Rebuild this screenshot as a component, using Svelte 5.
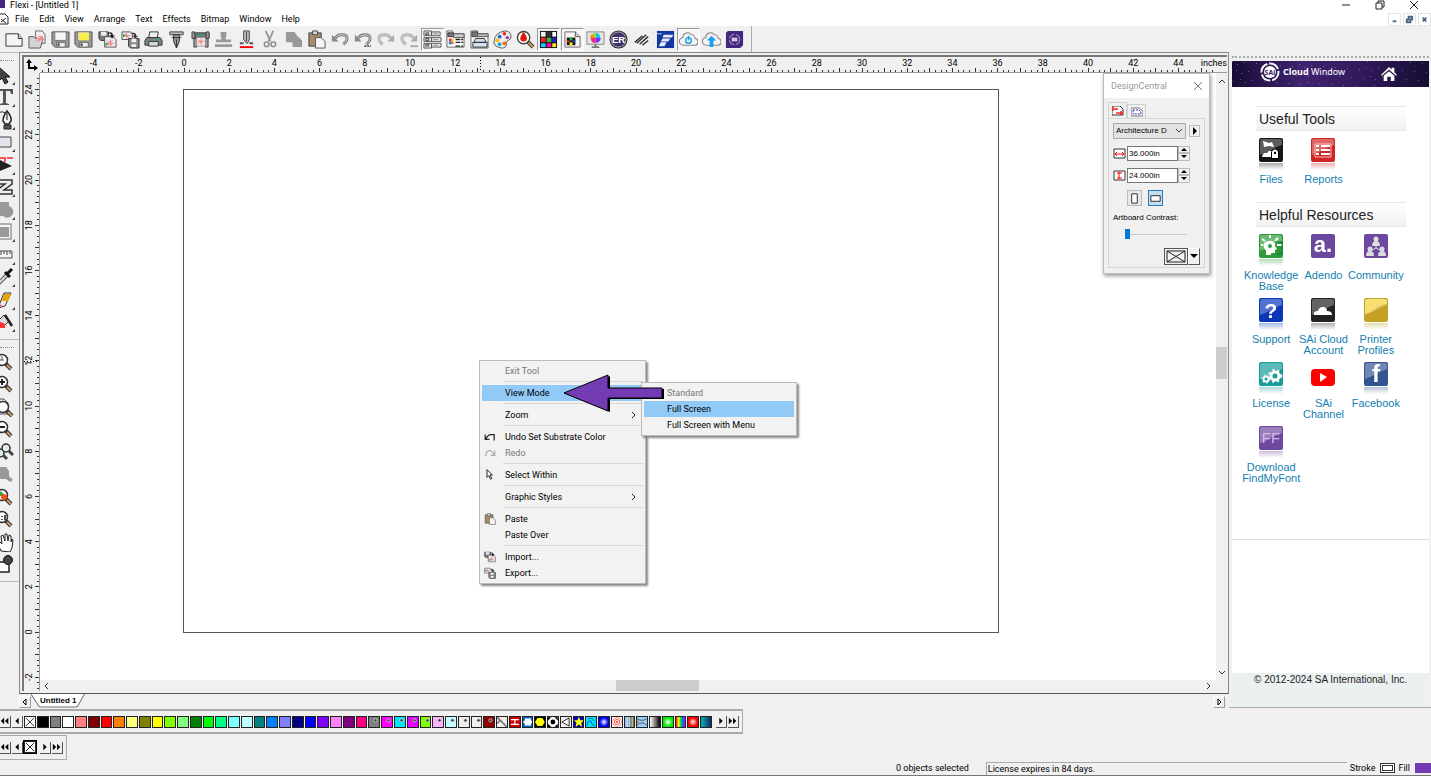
<script>
    const menus = ['File', 'Edit', 'View', 'Arrange', 'Text', 'Effects', 'Bitmap', 'Window', 'Help'];

    const toolGroups = [
        ['new', 'open', 'save', 'saveAll'],
        ['import', 'export', 'print', 'plot'],
        ['rip', 'stamp', 'engrave', 'cut'],
        ['copy', 'paste', 'undo', 'undoTo'],
        ['redo', 'redoTo', 'layers', 'colorList'],
        ['plotList', 'palette', 'inspect', 'swatches'],
        ['page', 'monitor', 'er', 'hatch'],
        ['rocket', 'cloudInfo', 'cloudUp', 'saHub']
    ];
    const pressed = ['layers', 'swatches', 'page', 'cloudInfo'];

    const sideTools = [
        ['select', 'text'], ['pen', 'rect'], ['effect', 'outline'],
        ['weld', 'frame'], ['measure', 'dropper'], ['pencil', 'fill']
    ];
    const zoomTools = [
        ['zoomPrev', 'zoomIn'], ['zoomPage', 'zoomOut'], ['zoomPair', 'zoomOff'],
        ['zoomShape', 'zoomOne'], ['hand', 'pin']
    ];

    const lens = '<path d="M12 12l5 5" stroke="#333" stroke-width="4"/><path d="M13 13l4 4" stroke="#c9a06a" stroke-width="2"/><circle cx="8" cy="8" r="5.5" fill="#fff" stroke="#333" stroke-width="1.5"/>';
    const disk = '<path d="M1 2h18v16H4l-3-3z" fill="#999" stroke="#555"/><path d="M4 2h12v9H4z" fill="#f6f6f6" stroke="#777"/><path d="M6 13h9v5H6z" fill="#eee" stroke="#666"/><path d="M7 14h2v3H7z" fill="#444"/>';
    const cloud = '<path d="M5 16a4 4 0 0 1-1-8 5 5 0 0 1 9-3 4 4 0 0 1 4 4 3.5 3.5 0 0 1-1 7z" fill="#f5f5f5" stroke="#888" stroke-width="1.2"/>';
    const backArrow = '<path d="M2 5v7h7z" fill="#888"/><path d="M5 9q3-4 7-4 6 0 6 4 0 3-4 6" stroke="#777" stroke-width="3"/><path d="M5 9q3-4 7-4 6 0 6 4 0 3-4 6" stroke="#ddd"/>';
    const nextArrow = '<path d="M18 5v7h-7z" fill="#aaa"/><path d="M15 9q-3-4-7-4-6 0-6 4 0 3 4 6" stroke="#aaa" stroke-width="3"/><path d="M15 9q-3-4-7-4-6 0-6 4 0 3 4 6" stroke="#ddd"/>';

    const icons = {
        new: '<path d="M1 4h13l4 5v8H1z" fill="#f4f4f6" stroke="#333"/><path d="M14 4v5h4" fill="#ccc" stroke="#333"/>',
        open: '<path d="M8 1h7l3 4v9H8z" fill="#eee" stroke="#666"/><path d="M1 7h5l2 2h8l-3 10H1z" fill="#d4d4d4" stroke="#555"/><path d="M10 12l5-5m-4 0h4v4M8 8l8 3" stroke="#f58a8a" stroke-width="1.5"/>',
        save: disk,
        saveAll: disk + '<path d="M5 3h11v8H5z" fill="#f6ee4c"/>',
        import: '<path d="M1 2h10v9H3L1 9z" fill="#777" stroke="#333"/><path d="M3 2h6v4H3z" fill="#eee"/><path d="M7 7h9l3 3v8H7z" fill="#eee" stroke="#555"/><path d="M11 3q4-2 5 3l2-1-3 4-3-3 2-1q-1-2-3-1z" fill="#222"/><path d="M9 14h8m-4-4v7m-3-6 5 5m0-5-5 5" stroke="#f07b7b"/><path d="M8 13l3 2-3 2z" fill="#2a5"/>',
        export: '<path d="M1 2h9l2 2v6H1z" fill="#eee" stroke="#555"/><path d="M3 6h7M6 3v6M4 4l4 4" stroke="#f07b7b"/><path d="M2 4l3 2-3 2z" fill="#2a5"/><path d="M8 9h11v10H10l-2-2z" fill="#888" stroke="#333"/><path d="M11 9h5v4h-5zM11 15h5v3h-5z" fill="#eee"/><path d="M11 3q5-1 5 3h2l-3 3-3-3h2q0-2-3-2z" fill="#333"/>',
        print: '<path d="M6 2h9l-1 6H5z" fill="#eee" stroke="#333"/><path d="M3 8h14l2 3v5H1v-5z" fill="#7c8480" stroke="#333"/><path d="M5 12h10v5H5z" fill="#d8d8d8" stroke="#333"/><path d="M15 10h2" stroke="#2b4" stroke-width="2"/>',
        plot: '<path d="M3 2h14v3H3z" fill="#bbb" stroke="#444"/><path d="M7 5h6v7l-3 7-3-7z" fill="#999" stroke="#333"/><path d="M5 8h10M10 10v8" stroke="#333"/>',
        rip: '<path d="M2 3h17v5H2z" fill="#777" stroke="#333"/><path d="M1 2h3v7H1zM16 2h3v7h-3zM3 9h3v9H3zM15 9h3v9h-3z" fill="#999" stroke="#444"/><path d="M6 8h9v9H6z" fill="#f8f4f4" stroke="#999"/><path d="M7 12h7m-3.500-4v8m-3-6 5 5m0-5-5 5" stroke="#ee8484"/><path d="M5 5h9" stroke="#1a8"/>',
        stamp: '<path d="M7 2h6v4l-1 4h6v3H2v-3h6L7 6zM1 15h18v3H1z" fill="#999"/>',
        engrave: '<path d="M7 1h6v9l-2 4-1 0-3-4zM10 2v10" fill="#bbb" stroke="#444"/><path d="M3 14h4m6 0h4" stroke="#555" stroke-width="2"/><path d="M3 18h14" stroke="#f00" stroke-width="2"/>',
        cut: '<path d="M6 1l5 11M14 1L9 12" stroke="#999" stroke-width="2"/><circle cx="7" cy="15" r="2.5" stroke="#888" stroke-width="1.5"/><circle cx="14" cy="15" r="2.5" stroke="#888" stroke-width="1.5"/>',
        copy: '<path d="M2 2h9l3 4v7H2zM9 7h6l4 4v7H9z" fill="#999"/>',
        paste: '<path d="M2 3h13v14H2z" fill="#a48c6b" stroke="#444"/><path d="M6 1h5v4H6z" fill="#ddd" stroke="#444"/><path d="M9 8h6l4 4v7H9z" fill="#f6f6f6" stroke="#555"/>',
        undo: backArrow,
        undoTo: backArrow + '<path d="M12 17h7" stroke="#555" stroke-width="2" stroke-dasharray="2 1"/>',
        redo: nextArrow,
        redoTo: nextArrow + '<path d="M11 17h8" stroke="#aaa" stroke-width="2"/>',
        layers: '<path d="M1 1h8v5H1zM1 8h8v4H1zM1 14h8v5H1zM9 2h9v4H9zM9 8h10v4H9zM9 14h10v4H9z" fill="#e8e8e8" stroke="#555"/><path d="M3 3h3v2H3zM3 9h3v2H3zM3 15h3v2H3z" stroke="#444"/><path d="M11 4h5m-5 6h5m-5 6h5" stroke="#888"/>',
        colorList: '<path d="M1 1h6v3h12v14H1z" fill="#fff" stroke="#666"/><path d="M2 3h6v4H2z" fill="#777" stroke="#333"/><path d="M8 4h11v4H8z" fill="#ccc" stroke="#555"/><path d="M3 9h3v3H3z" fill="#e33"/><path d="M6 9h2v3H6z" fill="#fc0"/><path d="M3 12h3v3H3z" fill="#27d"/><path d="M6 12h2v3H6z" fill="#f70"/><path d="M10 10h8m-8 3h8m-8 4h8" stroke="#222" stroke-width="1.5" stroke-dasharray="5 1"/>',
        plotList: '<path d="M1 1h7v3h11v15H1z" fill="#f4f4f4" stroke="#666"/><path d="M2 2h6v5H2z" fill="#777" stroke="#444"/><path d="M8 4h11v3H8z" fill="#bbb" stroke="#555"/><path d="M6 9h9l2 4H4zM3 13h15v5H3z" fill="#d6e2f6" stroke="#333"/>',
        palette: '<path d="M12 1q7 0 7 6 0 3-3 4-3 1-2 4 0 4-5 4-8-1-8-7 1-9 11-11z" fill="#eee" stroke="#555"/><circle cx="7" cy="7" r="2" fill="#26c"/><circle cx="12" cy="4" r="1.800" fill="#e22"/><circle cx="15" cy="8" r="1.800" fill="#a3b"/><circle cx="4.500" cy="11" r="2" fill="#fb0"/><circle cx="7" cy="15" r="2" fill="#1ac"/><circle cx="12" cy="14" r="2" fill="#f60"/>',
        inspect: '<path d="M12 12l6 6" stroke="#333" stroke-width="4"/><path d="M13 13l5 5" stroke="#dba55e" stroke-width="2"/><circle cx="8" cy="8" r="6.500" fill="#fff" stroke="#444" stroke-width="1.5"/><path d="M8 2q7 9 0 10-7-1 0-10z" fill="#e0140a"/>',
        swatches: '<path d="M1 1h18v18H1z" fill="#111"/><path d="M2 2h5v5H2z" fill="#eee"/><path d="M14 2h4v5h-4z" fill="#fff"/><path d="M8 2h5v5H8z" fill="#333"/><path d="M2 8h5v5H2z" fill="#e22"/><path d="M8 8h5v5H8z" fill="#4a4"/><path d="M14 8h4v5h-4z" fill="#22c"/><path d="M2 14h5v4H2z" fill="#1cf"/><path d="M8 14h5v4H8z" fill="#f0a"/><path d="M14 14h4v4h-4z" fill="#fe0"/>',
        page: '<path d="M2 2h11l5 5v11H2z" fill="#f6f6f6" stroke="#666"/><path d="M13 2v5h5" fill="#ccc" stroke="#555"/><path d="M4 8h9v8H4z" fill="#111"/><path d="M7 8h3v3H7z" fill="#2b3"/><path d="M4 11h3v2H4z" fill="#e22"/><path d="M10 11h3v2h-3z" fill="#24d"/><path d="M7 13h3v3H7z" fill="#fe0"/>',
        monitor: '<path d="M1 2h18v13H1z" fill="#e4e4e4" stroke="#888"/><path d="M6 18h8M10 15v3" stroke="#777" stroke-width="2"/><path d="M10 8.500V3a5.500 5.500 0 0 1 5 5.500z" fill="#2bd"/><path d="M10 8.500h5.500a5.500 5.500 0 0 1-5.500 5z" fill="#63f"/><path d="M10 8.500v5.500a5.500 5.500 0 0 1-5-5.500z" fill="#f28"/><path d="M10 8.500H4.500a5.500 5.500 0 0 1 5.500-5.500z" fill="#9d2"/><path d="M10 8.500l-4-4-2 4z" fill="#f80"/>',
        er: '<circle cx="10" cy="10" r="9.500" fill="#222"/><circle cx="10" cy="10" r="8" fill="#43316d" stroke="#bbb"/><text x="10" y="14" text-anchor="middle" font-size="10" font-weight="700" fill="#fff" font-family="Liberation Sans, sans-serif">ER</text>',
        hatch: '<path d="M3 13l8-7M5 14l10-9M8 15l9-8M11 16l6-5" stroke="#333" stroke-width="1.5"/>',
        rocket: '<path d="M1 1h18v18H1z" fill="#1038a0"/><path d="M8 5h10l-1 3H7zM7 9h8l-2 3H5zM5 13h6l-2 4H3z" fill="#e6ecfa"/><path d="M1 4h5" stroke="#c9dcff"/>',
        cloudInfo: cloud + '<circle cx="10" cy="11" r="3" stroke="#18a0e8" stroke-width="1.5"/><path d="M10 6v5" stroke="#18a0e8" stroke-width="1.5"/>',
        cloudUp: cloud + '<path d="M10 6l5 5h-3v7H8v-7H5z" fill="#18a0f0"/>',
        saHub: '<path d="M3 1h16v15l-3 3H1V3z" fill="#43267e"/><circle cx="10" cy="10" r="5.500" stroke="#bbaed6" stroke-dasharray="7 2"/><path d="M7 8h6v4H7z" fill="#cfc6e2"/>',

        select: '<path d="M5 2l11 10h-5l3 5-3 2-3-6-3 3z" fill="#444" stroke="#111"/>',
        text: '<path d="M2 2h17v5h-2l-1-3h-4v12l3 1v1H6v-1l3-1V4H5L4 7H2z" fill="#555"/>',
        pen: '<path d="M13 1q5 6 4 10l-2 3h-4l-2-3q0-5 4-10z" fill="#eee" stroke="#222" stroke-width="1.5"/><path d="M13 3v7M10 15h7v4h-7z" stroke="#222" fill="#555"/><path d="M2 8q4-9 9-5" stroke="#222"/>',
        rect: '<path d="M1 5h16v10H1z" fill="#e4e4ee" stroke="#444"/>',
        effect: '<path d="M6 5l12 6-12 5z" fill="#222"/><path d="M5 3h6v4M13 3h6" stroke="#f22" stroke-width="1.5"/>',
        outline: '<path d="M3 3h15v4l-8 6h8v4H3v-4l8-6H3z" fill="#eee" stroke="#333" stroke-width="1.5"/>',
        weld: '<path d="M3 2h12v4a6 6 0 1 1-6 10H3z" fill="#999"/>',
        frame: '<path d="M2 2h15v15H2z" fill="#f4f4f4" stroke="#999" stroke-width="1.5"/><path d="M4 5h11v10H4z" fill="#999"/>',
        measure: '<path d="M1 6h17v7H1z" fill="#f4f4f4" stroke="#555"/><path d="M7 6v4m3-4v3m3-3v4m3-4v3" stroke="#444"/>',
        dropper: '<path d="M4 17L13 8" stroke="#444" stroke-width="4"/><path d="M5 16l8-8" stroke="#ddd" stroke-width="2"/><path d="M11 5l5 5m-3-3l5-5" stroke="#111" stroke-width="3"/>',
        pencil: '<path d="M4 18l6-15h7l-6 13z" fill="#eee" stroke="#333"/><path d="M10 4h7l-3 7H8z" fill="#e9a400"/><path d="M4 18l2-4 3 2z" fill="#e69"/>',
        fill: '<path d="M4 9l6-6 5 6-6 6z" fill="#ddd" stroke="#333"/><path d="M11 3l7 11" stroke="#222" stroke-width="2.5"/><path d="M5 10q7 0 6 6H4z" fill="#f33"/>',
        zoomPrev: lens + '<path d="M4 8h6M8 4v4" stroke="#555"/>',
        zoomIn: lens + '<path d="M5 8h6M8 5v6" stroke="#222" stroke-width="2"/>',
        zoomPage: '<path d="M1 2h9l4 4v11H1z" fill="#ddd" stroke="#555"/><g transform="translate(1 2)">' + lens + '</g>',
        zoomOut: lens + '<path d="M5 8h6" stroke="#222" stroke-width="2"/>',
        zoomPair: '<path d="M8 12l5 5M14 8l5 5" stroke="#444" stroke-width="3"/><circle cx="6" cy="11" r="4" fill="#dfeee0" stroke="#333" stroke-width="1.5"/><circle cx="12" cy="6" r="4" fill="#dfeee0" stroke="#333" stroke-width="1.5"/>',
        zoomOff: '<path d="M3 3h9l3 4v5l4 4-3 2-4-3H3z" fill="#999"/>',
        zoomShape: lens + '<path d="M3 9l4-5 4 5z" fill="#2a4"/><circle cx="10" cy="10" r="3" fill="#f5521a"/>',
        zoomOne: lens + '<path d="M5 6v5m6-5v5M8 7v1m0 2v1" stroke="#111" stroke-width="1.5"/>',
        hand: '<path d="M7 19L3 10l2-1 3 3-1-8 2-1 2 6V2h2l1 7 1-6 2 1v6l1-3 1 1-1 8-2 4z" fill="#fff" stroke="#222"/>',
        pin: '<path d="M1 8h14v10H1z" fill="#fff" stroke="#222" stroke-width="1.5"/><circle cx="14" cy="6" r="4.500" fill="#444" stroke="#111"/>',
        pick: '<path d="M5 1l9 9h-4l3 6-2 1-3-6-3 3z" fill="#fff" stroke="#111" stroke-width="1.5"/>',
        undoMenu: '<path d="M2 6v8h7M3 13q4-7 8-7h6v10" stroke="#222" stroke-width="2"/>',
        redoMenu: '<path d="M18 6v8h-7M17 13q-4-7-8-7-6 0-6 9" stroke="#aaa" stroke-width="2"/>'
    };

    // quarter-inch steps; every fourth one is a full inch
    const inch = 22.6;
    const hTicks = Array.from({ length: 208 }, (_, i) => i - 25);
    const vTicks = Array.from({ length: 121 }, (_, i) => i - 21);
    const hLabels = Array.from({ length: 26 }, (_, i) => i * 2 - 6);
    const vLabels = Array.from({ length: 14 }, (_, i) => i * 2 - 2);

    const colors = [
        '#000', '#808080', '#fff', '#ff8080', '#800000', '#f00', '#ff8000', '#ffff80', '#808000',
        '#ff0', '#80ff00', '#80ff80', '#008000', '#0f0', '#00ff80', '#80ffff', '#c0ffff', '#008080',
        '#0080ff', '#8080ff', '#000080', '#00f', '#8000ff', '#ff80ff', '#800080', '#ff0080'
    ];
    const spots = ['#808080', '#ff00ff', '#00e5ff', '#e600ff', '#80ff00', '#ffb0ff', '#c0ffff', '#eee', '#eee', '#900000'];
    const patterns = [
        ['#eee', '<path d="M0 0l12 12M0 8q5-6 6-2" stroke="#777" stroke-width="2" fill="none"/>'],
        ['#c00', '<path d="M1 3h10M1 9h10M6 3v6" stroke="#fff" stroke-width="1.5"/>'],
        ['#06c', '<path d="M3 1l3 1 3-1 1 3 2 2-2 2-1 3-3-1-3 1-1-3-2-2 2-2z" fill="#fff"/>'],
        ['#000', '<path d="M3 1h6l3 5-3 5H3L0 6z" fill="#ff0"/>'],
        ['#fff', '<path d="M0 0h4L0 4zM12 0v4L8 0zM0 12V8l4 4zM12 12H8l4-4z"/><circle cx="6" cy="6" r="3"/>'],
        ['#eee', '<path d="M10 1v10L1 6z" fill="#fff" stroke="#000"/>'],
        ['#0000c0', '<path d="M6 0l2 4h4L9 7l1 5-4-3-4 3 1-5-3-3h4z" fill="#ff0"/>'],
        ['#00dff5', '<path d="M1 11q2-9 5-6 0 4 5 6M3 2q5-2 7 3" stroke="#0048b0" fill="none"/>'],
        ['radial-gradient(#fff, #00f 60%)', ''],
        ['radial-gradient(#f66 15%, #fff 20%, #f55 35%, #fff 50%, #f66 60%, #fff 70%)', ''],
        ['linear-gradient(90deg, #77aadd, #cde5ff 25%, #77aadd 40%, #cde5ff 55%, #553 65%, #cca 80%, #553)', ''],
        ['#9cf', '<path d="M0 2q6 4 12 0M0 10q6-6 12 0" stroke="#443" fill="none"/><path d="M0 3l3 3-3 3z" fill="#a97"/>'],
        ['linear-gradient(90deg, #fff, #000)', ''],
        ['radial-gradient(#fff, #0e0 60%)', ''],
        ['linear-gradient(90deg, #f00, #ff0 30%, #0e4 50%, #06f 75%, #d0f)', ''],
        ['radial-gradient(#fff, #f00 60%)', ''],
        ['linear-gradient(90deg, #00b0b0, #1a6a8a 50%, #003060)', '']
    ];

    const contextMenu = [
        { label: 'Exit Tool', disabled: true },
        {},
        { label: 'View Mode', active: true },
        {},
        { label: 'Zoom', more: true },
        {},
        { label: 'Undo Set Substrate Color', icon: 'undoMenu' },
        { label: 'Redo', icon: 'redoMenu', disabled: true },
        {},
        { label: 'Select Within', icon: 'pick' },
        {},
        { label: 'Graphic Styles', more: true },
        {},
        { label: 'Paste', icon: 'paste' },
        { label: 'Paste Over' },
        {},
        { label: 'Import...', icon: 'import' },
        { label: 'Export...', icon: 'export' }
    ];

    const usefulTools = [
        { label: 'Files', color: '#161616', art: '<path d="M4 3l6 2 3-1 2 5-5-1-5 1zM3 19q1-5 5-4 2-4 5-1 2 1 1 5z" fill="#fff"/><path d="M12 14h8v7h-8z"/><path d="M14 16v-2q2-3 4 0v2" fill="none" stroke="#fff" stroke-width="2"/><path d="M13 16h6v4h-6z" fill="#fff"/>' },
        { label: 'Reports', color: '#cf2524', art: '<path d="M4 6h16v13H4z" fill="none" stroke="#fbb"/><path d="M5 8h3M5 12h3M5 16h3M10 8h9M10 12h9M10 16h9" stroke="#fff" stroke-width="2"/>' }
    ];
    const resources = [
        { label: 'Knowledge Base', color: '#2f9a3a', art: '<path d="M7 21v-4q-6-8 2-10 8-1 7 5l2 3-2 1v3h-4v2z" fill="#fff"/><circle cx="11" cy="12" r="2" fill="#2f9a3a"/><path d="M3 5l3 2M11 1v3M19 4l-3 3M23 11h-5M2 11h2" stroke="#fff" stroke-width="2"/><path d="M16 8h7v12h-5" stroke="#073" fill="none"/>' },
        { label: 'Adendo', color: '#6d489f', flat: true, art: '<text x="12" y="18" text-anchor="middle" font-size="22" font-weight="700" fill="#fff">a.</text>' },
        { label: 'Community', color: '#6d489f', flat: true, art: '<path d="M12 9v5l-6 3M12 14l6 3" stroke="#ddd" fill="none"/><g fill="#ddd"><circle cx="12" cy="5" r="2.500"/><path d="M8 12q0-5 4-5t4 5z"/><circle cx="6" cy="15" r="2.500"/><path d="M2 22q0-5 4-5t4 5z"/><circle cx="18" cy="15" r="2.500"/><path d="M14 22q0-5 4-5t4 5z"/></g>' },
        { label: 'Support', color: '#0a36ba', art: '<text x="12" y="20" text-anchor="middle" font-size="21" font-weight="700" fill="#fff">?</text>' },
        { label: 'SAi Cloud Account', color: '#222', art: '<path d="M3 17q-1-4 4-4 1-4 5-4 4 0 4 4 5 0 5 4z" fill="#fff"/>' },
        { label: 'Printer Profiles', color: '#c4a024', art: '<path d="M1 3q0-2 2-2h18q2 0 2 2v3Q16 7 11 11T1 16z" fill="#f5de72"/>' },
        { label: 'License', color: '#189b9b', art: '<circle cx="16" cy="14" r="4" fill="none" stroke="#fff" stroke-width="3"/><circle cx="16" cy="14" r="6" fill="none" stroke="#fff" stroke-width="2" stroke-dasharray="2 3"/><circle cx="7" cy="17" r="2.500" fill="none" stroke="#fff" stroke-width="2"/><circle cx="7" cy="17" r="4" fill="none" stroke="#fff" stroke-dasharray="2 2"/>' },
        { label: 'SAi Channel', video: true },
        { label: 'Facebook', color: '#345391', art: '<text x="12" y="20" text-anchor="middle" font-size="24" font-weight="700" fill="#fff">f</text>' },
        { label: 'Download FindMyFont', color: '#6d489f', art: '<text x="12" y="17" text-anchor="middle" font-size="15" fill="#d3b5ec">FF</text>' }
    ];

    let preset = $state('Architecture D');
    let width = $state('36.000in');
    let height = $state('24.000in');
    let contrast = $state(0);
    let stars = Array.from({ length: 60 }, (_, i) => [(i * 67) % 197, (i * 29) % 26]);
</script>

{#snippet icon(name)}
    <svg viewBox="0 0 20 20" fill="none" aria-hidden="true">{@html icons[name]}</svg>
{/snippet}

{#snippet nav(label, path)}
    <button class="nav" aria-label={label}><svg viewBox="0 0 12 12"><path d={path} /></svg></button>
{/snippet}

{#snippet spin(label)}
    <span class="spin">
        <button aria-label="Increase {label}"><svg viewBox="0 0 6 4"><path d="M0 4l3-3 3 3z" /></svg></button>
        <button aria-label="Decrease {label}"><svg viewBox="0 0 6 4"><path d="M0 0l3 3 3-3z" /></svg></button>
    </span>
{/snippet}

{#snippet appLink(item)}
    <a href="#{item.label}">
        <svg viewBox="0 0 24 32" font-family="Liberation Sans, Arial, sans-serif">
            {#if item.video}
                <rect y="7" width="24" height="17" rx="4" fill="#f00" />
                <path d="M9 11l7 4-7 5z" fill="#fff" />
            {:else}
                <rect width="24" height="24" rx="2" fill={item.color} />
                {#if !item.flat}
                    <path d="M1 3q0-2 2-2h18q2 0 2 2v4Q17 9 12 12T1 17z" fill="#fff" opacity=".3" />
                    <rect y="25" width="24" height="7" fill={item.color} class="mirror" />
                {/if}
                {@html item.art}
            {/if}
        </svg>
        <span>{item.label}</span>
    </a>
{/snippet}

<div class="app">
    <header class="title">
        <span class="logo"></span>
        <span class="name">Flexi - [Untitled 1]</span>
        <button aria-label="Minimize"><svg viewBox="0 0 12 12"><path d="M2 5h8" /></svg></button>
        <button aria-label="Restore"><svg viewBox="0 0 12 12"><path d="M2 3h6v6H2zM4 3V1h6v6H8" /></svg></button>
        <button aria-label="Close"><svg viewBox="0 0 12 12"><path d="M2 1l8 8M10 1L2 9" /></svg></button>
    </header>

    <nav class="menubar">
        <svg class="doc-icon" viewBox="0 0 10 12"><path d="M0 1h5l3 3v7H0M1 6l5 4M6 5L1 9" /></svg>
        {#each menus as menu}
            <button>{menu}</button>
        {/each}
        <span class="mdi">
            <button aria-label="Minimize document"><svg viewBox="0 0 12 12"><path d="M4 8h4" /></svg></button>
            <button aria-label="Restore document"><svg viewBox="0 0 12 12"><path d="M3 6h4v3H3zM5 6V3h4v3H7" /></svg></button>
            <button aria-label="Close document"><svg viewBox="0 0 12 12"><path d="M4 4l4 4M8 4L4 8" /></svg></button>
        </span>
    </nav>

    <div class="toolbar">
        {#each toolGroups as group}
            <div class="group">
                {#each group as name}
                    <button class:pressed={pressed.includes(name)} aria-label={name}>{@render icon(name)}</button>
                {/each}
            </div>
        {/each}
    </div>

    <main>
        <aside class="tools">
            <div class="grip"></div>
            <div class="stack">
                {#each sideTools as pair}
                    <div>
                        {#each pair as name}
                            <button class="flyout" aria-label={name}>{@render icon(name)}</button>
                        {/each}
                    </div>
                {/each}
            </div>
            <div class="grip"></div>
            <div class="stack">
                {#each zoomTools as pair}
                    <div>
                        {#each pair as name}
                            <button aria-label={name}>{@render icon(name)}</button>
                        {/each}
                    </div>
                {/each}
            </div>
        </aside>

        <section class="document">
            <div class="frame">
                <div class="corner">
                    <svg viewBox="0 0 15 15"><path d="M5 5v6h7" fill="none" stroke="#000" stroke-width="2" /><path d="M2 6l3-4 3 4zM10 8l4 3-4 3z" /></svg>
                </div>
                <svg class="ruler-h">
                    {#each hTicks as t}
                        <line x1={144 + t * inch / 4} x2={144 + t * inch / 4} y1={t % 4 ? 13 : 11} y2="15" />
                    {/each}
                    {#each hLabels as n}
                        <text x={144 + n * inch} y="9" text-anchor="middle">{n}</text>
                    {/each}
                    <text x="100%" y="9" text-anchor="end">inches</text>
                    <line class="track" x1="440" x2="440" y1="0" y2="15" />
                </svg>
                <svg class="ruler-v">
                    {#each vTicks as t}
                        <line y1={559 - t * inch / 4} y2={559 - t * inch / 4} x1={t % 4 ? 13 : 11} x2="15" />
                    {/each}
                    {#each vLabels as n}
                        <text transform="translate(8 {559 - n * inch}) rotate(-90)" text-anchor="middle">{n}</text>
                    {/each}
                    <line class="track" x1="0" x2="15" y1="288" y2="288" />
                </svg>

                <div class="canvas">
                    <div class="artboard"></div>

                    <div class="popup context" role="menu">
                        {#each contextMenu as item}
                            {#if item.label}
                                <button role="menuitem" class:active={item.active} disabled={item.disabled}>
                                    <span class="pic">{#if item.icon}{@render icon(item.icon)}{/if}</span>
                                    <span>{item.label}</span>
                                    {#if item.more}<svg class="more" viewBox="0 0 6 8"><path d="M1 1l3 3-3 3" /></svg>{/if}
                                </button>
                            {:else}
                                <hr />
                            {/if}
                        {/each}
                        <div class="popup submenu" role="menu">
                            <button role="menuitem" disabled><span class="pic"></span>Standard</button>
                            <button role="menuitem" class="active"><span class="pic"></span>Full Screen</button>
                            <button role="menuitem"><span class="pic"></span>Full Screen with Menu</button>
                        </div>
                    </div>

                    <svg class="arrow" viewBox="0 0 102 40">
                        <path d="M2 19L46 1v13h54v10H46v13z" fill="#000" transform="translate(1 1)" />
                        <path d="M1 19L45 1v13h54v10H45v13z" fill="#743cb4" stroke="#000" stroke-width="1" />
                    </svg>

                    <div class="design">
                        <div class="design-title">DesignCentral <button aria-label="Close DesignCentral"><svg viewBox="0 0 10 10"><path d="M1 1l8 8M9 1L1 9" /></svg></button></div>
                        <div class="tabs">
                            <button class="on" aria-label="Page size"><svg viewBox="0 0 12 10"><path d="M0 0h8l3 3v6H0z" fill="#fff" stroke="#333" /><path d="M1 3h5M4 7h7M1 1v4M9 5v4" stroke="#f22" stroke-width="1.5" /></svg></button>
                            <button aria-label="Margins"><svg viewBox="0 0 12 10"><path d="M0 1h8l4 3v5H0z" fill="#fff" stroke="#777" /><path d="M2 3h6l2 2v2H2z" fill="none" stroke="#33c" stroke-dasharray="2 1" /></svg></button>
                        </div>
                        <div class="pane">
                            <div class="line">
                                <span class="preset">
                                    <select bind:value={preset} aria-label="Artboard preset"><option>Architecture D</option></select>
                                    <svg viewBox="0 0 8 6"><path d="M1 1l3 3 3-3" /></svg>
                                </span>
                                <button class="play" aria-label="Preset options"><svg viewBox="0 0 9 10"><path d="M3 1l4 4-4 4z" /></svg></button>
                            </div>
                            <div class="line">
                                <svg class="dim" viewBox="0 0 13 11"><path d="M1 1h11v9H1z" fill="#fff" stroke="#333" /><path d="M2 6h9M4 4L2 6l2 2M9 4l2 2-2 2" fill="none" stroke="#f00" /></svg>
                                <input bind:value={width} aria-label="Width" />
                                {@render spin('width')}
                            </div>
                            <div class="line">
                                <svg class="dim" viewBox="0 0 13 11"><path d="M1 1h11v9H1z" fill="#fff" stroke="#333" /><path d="M6 2v7M4 3h5M4 8h5" fill="none" stroke="#f00" /></svg>
                                <input bind:value={height} aria-label="Height" />
                                {@render spin('height')}
                            </div>
                            <div class="orient">
                                <button aria-label="Portrait"><svg viewBox="0 0 14 14"><path d="M4 2h6v10H4z" /></svg></button>
                                <button class="on" aria-label="Landscape"><svg viewBox="0 0 14 14"><path d="M2 4h10v6H2z" /></svg></button>
                            </div>
                            <label for="contrast">Artboard Contrast:</label>
                            <input id="contrast" type="range" bind:value={contrast} />
                            <div class="substrate">
                                <button aria-label="Substrate color"><svg viewBox="0 0 22 15"><path d="M2 2h18v11H2zM2 2l18 11M20 2L2 13" /></svg></button>
                                <button class="drop" aria-label="Substrate color list"><svg viewBox="0 0 8 5"><path d="M0 0h8L4 4z" /></svg></button>
                            </div>
                        </div>
                    </div>
                </div>

                <div class="scroll-v">
                    <svg viewBox="0 0 8 6"><path d="M1 5l3-3 3 3" /></svg>
                    <span class="thumb"></span>
                    <svg viewBox="0 0 8 6"><path d="M1 1l3 3 3-3" /></svg>
                </div>
                <div class="scroll-h">
                    <svg viewBox="0 0 6 8"><path d="M5 1L2 4l3 3" /></svg>
                    <span class="thumb"></span>
                    <svg viewBox="0 0 6 8"><path d="M1 1l3 3-3 3" /></svg>
                </div>
            </div>
            <div class="sheets">
                <button class="step" aria-label="Previous sheet"><svg viewBox="0 0 10 10"><path d="M6 2v6L3 5z" /></svg></button>
                <div class="sheet">
                    <svg viewBox="0 0 54 14" preserveAspectRatio="none"><path d="M0 0l7 11q1 2 3 2h34q2 0 3-2l6-11" /></svg>
                    <button>Untitled 1</button>
                </div>
                <button class="step last" aria-label="Next sheet"><svg viewBox="0 0 10 10"><path d="M4 2v6l3-3z" /></svg></button>
            </div>
        </section>

        <aside class="cloud">
            <div class="grip"></div>
            <div class="banner">
                <svg class="sky" viewBox="0 0 197 26" preserveAspectRatio="none">
                    {#each stars as [x, y]}
                        <rect {x} {y} width="1" height="1" fill="#b3a2d6" opacity=".5" />
                    {/each}
                </svg>
                <svg class="mark" viewBox="0 0 20 20"><circle cx="10" cy="10" r="8.500" fill="none" stroke="#fff" stroke-width="2" stroke-dasharray="11 2" /><circle cx="10" cy="10" r="6" fill="#fff" /><text x="10" y="13" text-anchor="middle" font-size="7" font-weight="700" fill="#3a2268">SAi</text></svg>
                <span><b>Cloud</b> Window</span>
                <a href="#home" aria-label="Home"><svg viewBox="0 0 20 18"><path d="M10 1l3 3V2h3v5l3 3-1 1-8-7-8 7-1-1z" fill="#fff" /><path d="M10 6l6 5v6h-4v-5H8v5H4v-6z" fill="#fff" /></svg></a>
            </div>
            <div class="cloud-body">
                <h2>Useful Tools</h2>
                <div class="links">
                    {#each usefulTools as item}{@render appLink(item)}{/each}
                </div>
                <h2>Helpful Resources</h2>
                <div class="links">
                    {#each resources as item}{@render appLink(item)}{/each}
                </div>
                <hr />
            </div>
            <footer>© 2012-2024 SA International, Inc.</footer>
        </aside>
    </main>

    <div class="palette">
        {@render nav('First color', 'M5 2v8L1 6zM10 2v8L6 6z')}
        {@render nav('Previous color', 'M8 2v8L4 6z')}
        <div class="swatches">
            <button class="none" aria-label="No color"><svg viewBox="0 0 12 12"><path d="M1 1l10 10M11 1L1 11" stroke="#000" /></svg></button>
            {#each colors as c}
                <button aria-label={c} style:background={c}></button>
            {/each}
            {#each spots as c}
                <button aria-label="Spot {c}" style:background={c}><svg viewBox="0 0 12 12"><circle cx="8" cy="4" r="2" fill="#333" stroke="#ddd" /></svg></button>
            {/each}
            {#each patterns as [bg, art], i}
                <button aria-label="Pattern {i + 1}" style:background={bg}><svg viewBox="0 0 12 12">{@html art}</svg></button>
            {/each}
        </div>
        {@render nav('Next color', 'M4 2v8l4-4z')}
        {@render nav('Last color', 'M1 2v8l4-4zM6 2v8l4-4z')}
    </div>
    <div class="palette small">
        {@render nav('First swatch', 'M5 2v8L1 6zM10 2v8L6 6z')}
        {@render nav('Previous swatch', 'M8 2v8L4 6z')}
        <div class="swatches">
            <button class="none" aria-label="No swatch"><svg viewBox="0 0 12 12"><path d="M1 1l10 10M11 1L1 11" stroke="#000" /></svg></button>
        </div>
        {@render nav('Next swatch', 'M4 2v8l4-4z')}
        {@render nav('Last swatch', 'M1 2v8l4-4zM6 2v8l4-4z')}
    </div>

    <footer class="status">
        <span class="count">0 objects selected</span>
        <span class="license">License expires in 84 days.</span>
        <span>Stroke</span>
        <span class="stroke"><i></i></span>
        <span>Fill</span>
        <span class="fill"></span>
    </footer>
</div>

<style>
    :global(body) {
        overflow: hidden;
    }

    .app {
        display: flex;
        flex-direction: column;
        height: 100vh;
        box-sizing: border-box;
        border-bottom: 1px solid #777;
        background: #f0f0f0;
        color: #000;
        font: 9px/12px Roboto, "Noto Sans", sans-serif;
    }

    .app * {
        box-sizing: border-box;
    }

    button,
    input,
    select {
        margin: 0;
        padding: 0;
        border: 0;
        background: none;
        color: inherit;
        font: inherit;
    }

    svg {
        display: block;
    }

    a {
        text-decoration: none;
    }

    /* title and menu */
    .title {
        display: flex;
        align-items: center;
        height: 12px;
        background: #fff;
    }

    .logo {
        width: 5px;
        height: 8px;
        background: #43267e;
        align-self: flex-start;
    }

    .name {
        flex: 1;
        align-self: flex-start;
        margin-left: 5px;
        line-height: 10px;
    }

    .title button {
        width: 12px;
        height: 12px;
        margin-right: 22px;
        align-self: flex-start;
    }

    .title button:last-child {
        margin-right: 11px;
    }

    .title path,
    .mdi path,
    .doc-icon path {
        fill: none;
        stroke: #222;
    }

    .menubar {
        display: flex;
        align-items: center;
        height: 14px;
        background: #fff;
    }

    .doc-icon {
        width: 10px;
        height: 12px;
    }

    .menubar > button {
        padding: 0 5px;
        line-height: 14px;
    }

    .mdi {
        display: flex;
        gap: 2px;
        margin-left: auto;
    }

    .mdi button {
        width: 13px;
        height: 13px;
        border: 1px solid #e5e5e5;
    }

    .mdi path {
        stroke: #4b6585;
        stroke-width: 2px;
    }

    .toolbar {
        display: flex;
        gap: 1px;
        align-self: flex-start;
        height: 26px;
        padding: 2px 5px 1px 3px;
        border-right: 1px solid #aaa;
    }

    .group {
        display: flex;
    }

    .group button {
        display: grid;
        place-items: center;
        width: 23px;
        height: 23px;
    }

    .group svg {
        width: 19px;
        height: 19px;
    }

    .group .pressed {
        background: #f6f6f6;
        border: 1px solid #fff;
        border-top-color: #999;
        border-left-color: #999;
    }

    /* workspace */
    main {
        flex: 1;
        min-height: 0;
        display: grid;
        grid-template-columns: 19px 1fr 202px;
    }

    .tools {
        overflow: hidden;
        border-top: 1px solid #bbb;
    }

    .grip {
        height: 4px;
        margin: 7px 5px 0 0;
        border-top: 1px dotted #888;
    }

    .stack {
        display: flex;
        flex-direction: column;
        gap: 1px;
        padding-bottom: 6px;
        border-bottom: 1px solid #bbb;
    }

    .stack button {
        position: relative;
        display: flex;
        align-items: center;
        justify-content: flex-end;
        width: 14px;
        height: 22px;
    }

    .stack svg {
        flex: none;
        width: 20px;
        height: 20px;
    }

    .flyout::after {
        content: '';
        position: absolute;
        left: 12px;
        bottom: 1px;
        border-top: 3px solid transparent;
        border-right: 3px solid #444;
    }

    .document {
        display: flex;
        flex-direction: column;
        min-width: 0;
    }

    .frame {
        flex: 1;
        min-height: 0;
        display: grid;
        grid-template: 18px 1fr 11px / 18px 1fr 11px;
        padding: 2px 1px 2px 2px;
        border: 1px solid #888;
        border-bottom-color: #555;
    }

    .frame > * {
        min-width: 0;
        min-height: 0;
    }

    .corner {
        border-top: 2px solid #777;
        border-left: 2px solid #777;
    }

    .corner svg {
        width: 15px;
        height: 15px;
    }

    .ruler-h {
        grid-column: 2 / 4;
        width: 100%;
        height: 18px;
        border-top: 2px solid #777;
        border-bottom: 1px solid #999;
    }

    .ruler-v {
        grid-row: 2 / 4;
        width: 18px;
        height: 100%;
        border-left: 2px solid #777;
        border-right: 1px solid #999;
    }

    .frame line {
        stroke: #333;
        shape-rendering: crispEdges;
    }

    .frame .track {
        stroke: #000;
        stroke-dasharray: 1 2;
    }

    .canvas {
        position: relative;
        background: #fff;
    }

    .artboard {
        position: absolute;
        left: 143px;
        top: 16px;
        width: 816px;
        height: 544px;
        border: 1px solid #555;
    }

    .scroll-v,
    .scroll-h {
        display: flex;
        align-items: center;
        justify-content: space-between;
    }

    .scroll-v {
        flex-direction: column;
        padding: 5px 0 4px;
    }

    .scroll-h {
        padding: 0 4px 0 3px;
    }

    .scroll-v svg {
        width: 8px;
        height: 6px;
    }

    .scroll-h svg {
        width: 6px;
        height: 8px;
    }

    .scroll-v path,
    .scroll-h path {
        fill: none;
        stroke: #333;
    }

    .thumb {
        background: #cdcdcd;
    }

    .scroll-v .thumb {
        width: 11px;
        height: 32px;
        margin-bottom: 28px;
    }

    .scroll-h .thumb {
        width: 83px;
        height: 11px;
        margin-left: 60px;
    }

    .sheets {
        display: flex;
        height: 15px;
    }

    .sheet {
        position: relative;
        padding: 0 9px;
    }

    .sheet svg {
        position: absolute;
        inset: 0;
        width: 100%;
        height: 14px;
    }

    .sheet path {
        fill: #fff;
        stroke: #777;
    }

    .sheet button {
        position: relative;
        font: bold 8px/14px "Liberation Sans", Arial, sans-serif;
    }

    .step {
        width: 12px;
        height: 12px;
        margin: 2px 0 0;
        border: 1px solid #fff;
        border-right-color: #999;
        border-bottom-color: #999;
    }

    .step path {
        fill: #fff;
        stroke: #000;
    }

    .step.last {
        margin: 2px 4px 0 auto;
    }

    /* context menu */
    .popup {
        position: absolute;
        padding: 2px;
        background: #f2f2f2;
        border: 1px solid #bbb;
        box-shadow: 2px 2px 2px #888;
    }

    .context {
        left: 439px;
        top: 287px;
        width: 167px;
    }

    .submenu {
        left: 161px;
        top: 21px;
        width: 156px;
    }

    .popup button {
        display: flex;
        align-items: center;
        width: 100%;
        height: 16px;
    }

    .popup button:disabled {
        color: #777;
    }

    .popup .active {
        background: #91c9f7;
    }

    .popup hr {
        height: 1px;
        margin: 2px 0 3px 21px;
        border: 0;
        background: #d7d7d7;
    }

    .pic {
        width: 23px;
        padding-left: 2px;
    }

    .pic svg {
        width: 12px;
        height: 12px;
    }

    .more {
        width: 6px;
        height: 8px;
        margin: 0 6px 0 auto;
    }

    .more path {
        fill: none;
        stroke: #222;
    }

    .arrow {
        position: absolute;
        left: 523px;
        top: 301px;
        width: 102px;
        height: 40px;
    }

    /* DesignCentral */
    .design {
        position: absolute;
        top: 0;
        right: 6px;
        width: 107px;
        padding-bottom: 5px;
        background: #f0f0f0;
        border: 1px solid #bbb;
        box-shadow: 1px 2px 4px #999;
        font: 8px/10px "Liberation Sans", Arial, sans-serif;
    }

    .design-title {
        display: flex;
        justify-content: space-between;
        align-items: center;
        height: 24px;
        padding: 0 6px 0 7px;
        background: #fff;
        color: #999;
        font: 9px/12px Roboto, sans-serif;
    }

    .design-title button {
        width: 10px;
        height: 10px;
    }

    .design-title path {
        stroke: #777;
    }

    .tabs {
        display: flex;
        align-items: flex-end;
        padding: 4px 0 0 4px;
    }

    .tabs button {
        width: 19px;
        height: 14px;
        padding: 2px 3px;
        border: 1px solid #d0d0d0;
        border-bottom: 0;
    }

    .tabs .on {
        height: 16px;
    }

    .tabs svg {
        width: 12px;
        height: 10px;
    }

    .pane {
        display: flex;
        flex-direction: column;
        gap: 6px;
        margin: 0 4px;
        padding: 4px 4px 2px;
        border: 1px solid #d5d5d5;
    }

    .line {
        display: flex;
        align-items: center;
        height: 16px;
    }

    .preset {
        position: relative;
    }

    .preset svg {
        position: absolute;
        right: 3px;
        top: 5px;
        width: 8px;
        height: 6px;
        pointer-events: none;
    }

    .preset path {
        fill: none;
        stroke: #444;
    }

    select {
        display: block;
        appearance: none;
        width: 73px;
        height: 16px;
        padding: 0 2px;
        border: 1px solid #aaa;
        background: #e3e3e3;
    }

    .play {
        width: 9px;
        height: 10px;
        margin-left: 4px;
        outline: 1px solid #bbb;
    }

    .dim {
        width: 13px;
        height: 11px;
    }

    .line input {
        width: 51px;
        height: 15px;
        margin-left: 1px;
        padding: 0 1px;
        border: 1px solid #777;
        background: #fff;
    }

    .spin {
        display: flex;
        flex-direction: column;
        width: 12px;
        height: 15px;
    }

    .spin button {
        display: grid;
        place-items: center;
        flex: 1;
        border: 1px solid #bbb;
    }

    .spin svg {
        width: 6px;
        height: 4px;
    }

    .orient {
        display: flex;
        gap: 6px;
        margin: 1px 0;
        padding-left: 14px;
    }

    .orient button {
        width: 15px;
        height: 16px;
        border: 1px solid #bbb;
        background: #e8e8e8;
    }

    .orient .on {
        border-color: #2a78c0;
        background: #c0dff5;
    }

    .orient path {
        fill: #fff;
        stroke: #222;
    }

    #contrast {
        appearance: none;
        width: 62px;
        height: 10px;
        margin-left: 12px;
        background: linear-gradient(#c8c8c8, #c8c8c8) center / 100% 1px no-repeat;
    }

    #contrast::-webkit-slider-thumb {
        appearance: none;
        width: 5px;
        height: 10px;
        background: #0078d7;
    }

    .substrate {
        display: flex;
        justify-content: flex-end;
        height: 17px;
        margin-top: 3px;
    }

    .substrate button {
        width: 24px;
        border: 1px solid #555;
    }

    .substrate path {
        fill: none;
        stroke: #222;
    }

    .substrate .drop {
        display: grid;
        place-items: center;
        width: 12px;
        border-color: #fff #555 #555 #fff;
    }

    .substrate .drop svg {
        width: 8px;
        height: 5px;
    }

    .substrate .drop path {
        fill: #000;
        stroke: none;
    }

    /* cloud window */
    .cloud {
        display: flex;
        flex-direction: column;
        margin-bottom: 1px;
        padding: 0 2px 0 3px;
        border-bottom: 1px solid #aaa;
        font-family: "Liberation Sans", Arial, sans-serif;
    }

    .cloud .grip {
        flex: none;
        height: 5px;
        margin: 4px 0 0;
        border-top: 2px dotted #aaa;
    }

    .banner {
        position: relative;
        flex: none;
        display: flex;
        align-items: center;
        height: 26px;
        padding: 0 31px 4px 28px;
        background: linear-gradient(90deg, #170c35, #3f236f 35%, #32195c 65%, #160d33);
        color: #fff;
        font: 9px/12px "Noto Sans", sans-serif;
    }

    .sky {
        position: absolute;
        inset: 0;
        width: 100%;
        height: 100%;
    }

    .mark {
        width: 20px;
        height: 20px;
        margin-right: 3px;
    }

    .banner a {
        margin: 4px 0 0 auto;
    }

    .banner a svg {
        width: 18px;
        height: 16px;
    }

    .cloud-body {
        flex: 1;
        padding-top: 19px;
        background: #fff;
    }

    h2 {
        width: 150px;
        height: 25px;
        margin: 0 0 7px 24px;
        padding-left: 3px;
        border: solid #e5e5e5;
        border-width: 1px 0;
        background: linear-gradient(#fff, #f1f1f1);
        color: #222;
        font-weight: normal;
        font-size: 14px;
        line-height: 24px;
    }

    .links {
        display: grid;
        grid-template-columns: repeat(3, minmax(0, 1fr));
        grid-auto-rows: 64px;
        margin: 0 27px 0 13px;
    }

    .links a {
        display: flex;
        flex-direction: column;
        align-items: center;
        color: #1280b0;
        font-size: 11px;
        line-height: 11px;
        text-align: center;
    }

    .links svg {
        flex: none;
        width: 24px;
        height: 32px;
        margin-bottom: 4px;
        mask-image: linear-gradient(#000 76%, transparent);
    }

    .mirror {
        opacity: .4;
    }

    .cloud-body hr {
        height: 1px;
        margin: 49px 0 0;
        border: 0;
        background: #ddd;
    }

    .cloud footer {
        height: 34px;
        background: #ebf0f0;
        color: #222;
        font-size: 10px;
        line-height: 14px;
        text-align: center;
    }

    /* color bars */
    .palette {
        display: flex;
        align-items: center;
        align-self: flex-start;
        gap: 1px;
        height: 25px;
        padding-right: 3px;
        border: solid #aaa;
        border-width: 2px 1px 2px 0;
    }

    .palette.small {
        margin-top: 1px;
        border-width: 1px 1px 1px 0;
    }

    .nav {
        width: 11px;
        height: 12px;
        border: solid #555;
        border-width: 0 1px 1px 0;
    }

    .swatches {
        display: grid;
        grid-template-columns: repeat(54, 1fr);
        width: 689px;
        margin-right: 2px;
    }

    .small .swatches {
        display: block;
        width: 13px;
    }

    .swatches button {
        height: 12px;
        border: 1px solid #222;
        margin-right: 1px;
        overflow: hidden;
    }

    .swatches svg {
        width: 100%;
        height: 100%;
    }

    .small .swatches button {
        width: 12px;
        outline: 1px solid #000;
    }

    .swatches .none {
        background: #fff;
    }

    .status {
        display: flex;
        align-items: center;
        gap: 3px;
        height: 14px;
        margin-top: 1px;
    }

    .count {
        margin-left: auto;
        margin-right: 14px;
    }

    .license {
        width: 361px;
        height: 13px;
        border: 1px solid #aaa;
        border-width: 1px 0 0 1px;
        padding-left: 1px;
    }

    .stroke {
        width: 15px;
        height: 10px;
        margin-left: 2px;
        padding: 1px;
        border: 1px solid #333;
        background: #fff;
    }

    .stroke i {
        display: block;
        height: 6px;
        border: 1px solid #333;
    }

    .fill {
        width: 16px;
        height: 10px;
        margin-left: 2px;
        background: #743cb4;
    }
</style>
